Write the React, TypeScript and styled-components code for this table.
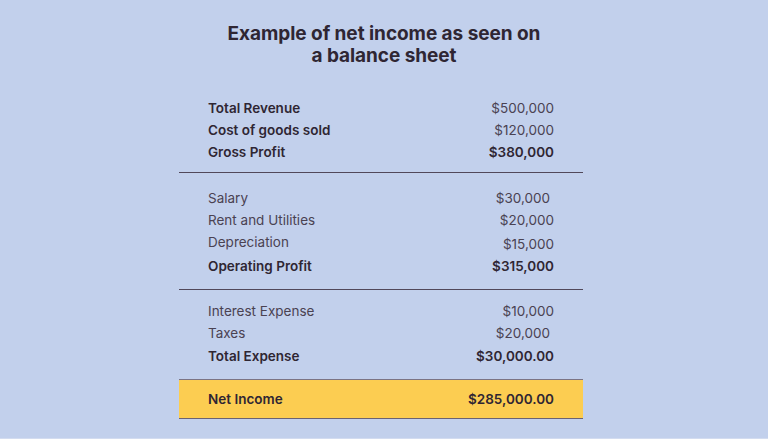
import React from "react";
import styled, { createGlobalStyle } from "styled-components";

const Global = createGlobalStyle`
  html, body { margin: 0; padding: 0; }
  body {
    background: #c2d0ec;
    font-family: Inter, "Open Sans", sans-serif;
    color: #2f2633;
    width: 768px;
    height: 439px;
    overflow: hidden;
  }
`;

const Page = styled.div`
  width: 768px;
  height: 439px;
  box-sizing: border-box;
  padding-top: 23px;
  border-bottom: 1px solid #d3dcf0;
  display: flex;
  flex-direction: column;
`;

const Title = styled.h1`
  margin: 0;
  text-align: center;
  font-size: 19px;
  line-height: 22px;
  font-weight: 700;
  color: #2f2633;
  letter-spacing: -0.05px;
`;

const Sheet = styled.div`
  width: 404px;
  margin-left: 179px;
  margin-top: 30px;
  display: flex;
  flex-direction: column;
`;

const Section = styled.div<{ $top: number; $bottom: number; $rule?: boolean }>`
  padding: ${(p) => p.$top}px 0 ${(p) => p.$bottom}px;
  border-bottom: ${(p) => (p.$rule ? "1.5px solid #51485a" : "none")};
  display: flex;
  flex-direction: column;
`;

const Row = styled.div<{ $strong?: boolean; $gap?: number }>`
  display: flex;
  justify-content: space-between;
  align-items: center;
  height: 22px;
  margin-top: ${(p) => p.$gap ?? 0}px;
  padding: 0 29px;
  font-size: 13.5px;
  font-weight: ${(p) => (p.$strong ? 600 : 400)};
  color: ${(p) => (p.$strong ? "#2f2633" : "#4a4252")};
`;

const Value = styled.span<{ $bold?: boolean; $shift?: number; $drop?: number }>`
  margin-right: ${(p) => p.$shift ?? 0}px;
  position: relative;
  top: ${(p) => p.$drop ?? 0}px;
  font-weight: ${(p) => (p.$bold ? 600 : 400)};
  color: ${(p) => (p.$bold ? "#2f2633" : "#4a4252")};
`;

const Total = styled.div`
  height: 38px;
  background: #fccd51;
  border-top: 1.5px solid #7c7484;
  border-bottom: 1.5px solid #6a6272;
  display: flex;
  justify-content: space-between;
  align-items: center;
  padding: 0 29px;
  font-size: 13.5px;
  font-weight: 600;
  color: #2f2633;
`;

type Item = {
  label: string;
  value: string;
  strong?: boolean;
  bold?: boolean;
  shift?: number;
  drop?: number;
  gap?: number;
};

const sections: { top: number; bottom: number; rule: boolean; items: Item[] }[] = [
  {
    top: 0,
    bottom: 9,
    rule: true,
    items: [
      { label: "Total Revenue", value: "$500,000", strong: true },
      { label: "Cost of goods sold", value: "$120,000", strong: true },
      { label: "Gross Profit", value: "$380,000", strong: true, bold: true },
    ],
  },
  {
    top: 14,
    bottom: 12,
    rule: true,
    items: [
      { label: "Salary", value: "$30,000", shift: 4 },
      { label: "Rent and Utilities", value: "$20,000" },
      { label: "Depreciation", value: "$15,000", drop: 2 },
      { label: "Operating Profit", value: "$315,000", strong: true, bold: true, gap: 2 },
    ],
  },
  {
    top: 10,
    bottom: 12,
    rule: false,
    items: [
      { label: "Interest Expense", value: "$10,000" },
      { label: "Taxes", value: "$20,000", shift: 4 },
      { label: "Total Expense", value: "$30,000.00", strong: true, bold: true, gap: 1 },
    ],
  },
];

export default function App() {
  return (
    <>
      <Global />
      <Page>
        <Title>
          Example of net income as seen on
          <br />a balance sheet
        </Title>
        <Sheet>
          {sections.map((s, i) => (
            <Section key={i} $top={s.top} $bottom={s.bottom} $rule={s.rule}>
              {s.items.map((it) => (
                <Row key={it.label} $strong={it.strong} $gap={it.gap}>
                  <span>{it.label}</span>
                  <Value $bold={it.bold} $shift={it.shift} $drop={it.drop}>
                    {it.value}
                  </Value>
                </Row>
              ))}
            </Section>
          ))}
          <Total>
            <span>Net Income</span>
            <span>$285,000.00</span>
          </Total>
        </Sheet>
      </Page>
    </>
  );
}
